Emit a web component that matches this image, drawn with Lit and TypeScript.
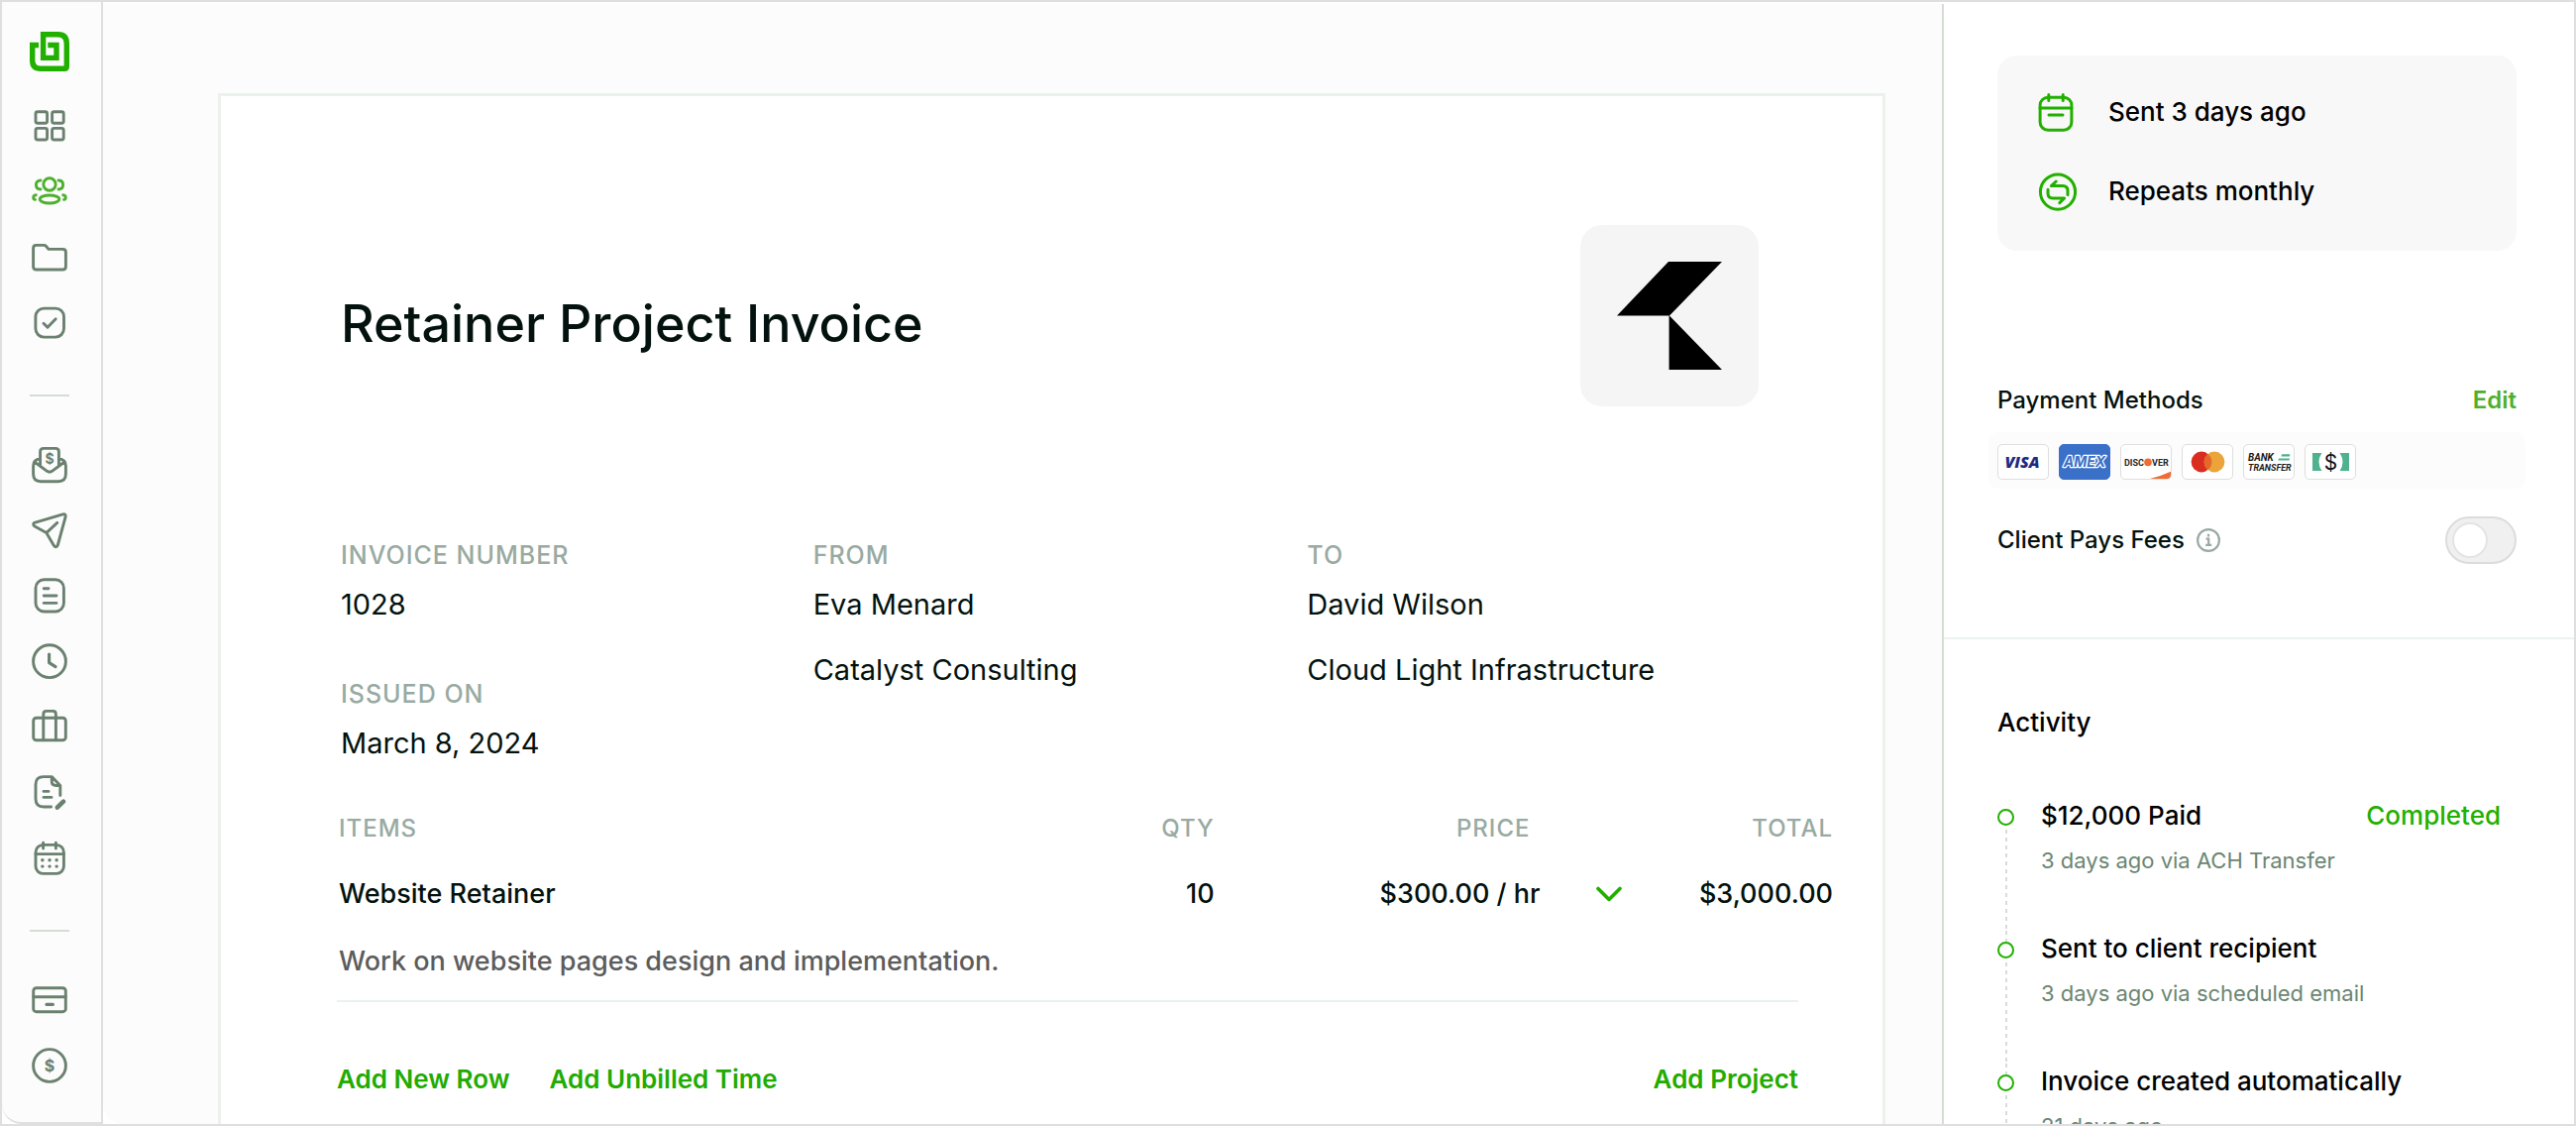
import { LitElement, html, css, svg } from "lit";
import type { SVGTemplateResult } from "lit";
import { customElement, property, state } from "lit/decorators.js";
import { classMap } from "lit/directives/class-map.js";

interface NavEntry {
  label: string;
  icon: SVGTemplateResult;
  active?: boolean;
}

interface ActivityEntry {
  title: string;
  detail: string;
  status?: string;
}

const navGroups: NavEntry[][] = [
  [
    {
      label: "Dashboard",
      icon: svg`<rect x="4" y="3.7" width="11.6" height="11.6" rx="2" /><rect x="20.6" y="3.7" width="11.6" height="11.6" rx="2" /><rect x="4" y="20.4" width="11.6" height="11.6" rx="2" /><rect x="20.6" y="20.4" width="11.6" height="11.6" rx="2" />`,
    },
    {
      label: "Clients",
      active: true,
      icon: svg`<circle cx="18" cy="11" r="6.2" /><ellipse cx="18" cy="26" rx="9.8" ry="4" /><path d="M9 7C6 7 4.4 9 4.4 11.5S6 16 9 16M27 7C30 7 31.6 9 31.6 11.5S30 16 27 16M4.3 21.8C2.5 22 1.7 23 1.7 24.3S2.4 26.3 3.5 26.4M31.7 21.8C33.5 22 34.3 23 34.3 24.3S33.6 26.3 32.5 26.4" />`,
    },
    {
      label: "Projects",
      icon: svg`<path d="M4.5 6.4H12.4Q13.6 6.4 14.4 7.3L17 10.4H31.4Q34.4 10.4 34.4 13.4V28Q34.4 31 31.4 31H4.6Q1.6 31 1.6 28V9.4Q1.6 6.4 4.5 6.4Z" />`,
    },
    {
      label: "Tasks",
      icon: svg`<rect x="3.9" y="4.1" width="28.6" height="29" rx="8.5" /><path d="M12 19.2L16 23.2L24.2 14.8" />`,
    },
  ],
  [
    {
      label: "Invoices",
      icon: svg`<path d="M8.6 18.6V4.5Q8.6 1.4 12 1.4H24Q27.4 1.4 27.4 4.5V18.6M8.6 11.8Q1.6 12.6 1.6 19V27Q1.6 34.7 9 34.7H27Q34.4 34.7 34.4 27V19Q34.4 12.6 27.4 11.8M2.8 15L15.5 24.3Q18 26 20.5 24.3L33.2 15" /><text class="sign" x="18" y="17.4" font-size="14">$</text>`,
    },
    {
      label: "Proposals",
      icon: svg`<path d="M2.8 10.3L31.5 1.9Q34.8 1.2 34.1 4.5L26.3 33Q24.6 36.2 22.4 33.4L14.8 20.6L2.6 13.8Q0.6 11.6 2.8 10.3ZM14.8 20.6L25.8 10.4" />`,
    },
    {
      label: "Contracts",
      icon: svg`<rect x="4" y="1.8" width="28.4" height="32.2" rx="8.5" /><path d="M12.2 10.8H17M12.2 18H25M12.2 25.4H25" />`,
    },
    {
      label: "Time tracking",
      icon: svg`<circle cx="18" cy="18.2" r="16.4" /><path stroke-width="3.2" d="M17.6 11V19.6L24 23.6" />`,
    },
    {
      label: "Services",
      icon: svg`<rect x="1.7" y="9.2" width="32.6" height="22.6" rx="3" /><path d="M11.8 31.8V5.4Q11.8 2.4 14.8 2.4H21.4Q24.4 2.4 24.4 5.4V31.8" />`,
    },
    {
      label: "Forms",
      icon: svg`<path d="M19.6 33H12Q4 33 4 25V10.4Q4 2.6 12 2.6H20.2L28.8 11.5V21.6M20.2 3V7Q20.2 11.5 24.6 11.5H28.4M12 17.4H17M12 23.4H20" /><path stroke-width="4.6" d="M25.8 33.6L32 27.6" />`,
    },
    {
      label: "Calendar",
      icon: svg`<rect x="4" y="5.4" width="28.4" height="29" rx="7.5" /><path d="M4 14.6H32.4M11.6 3.2V9M24.4 3.2V9" /><path stroke-width="3.4" d="M10.8 20.8h.1M18 20.8h.1M25.1 20.8h.1M10.8 27.1h.1M18 27.1h.1M25.1 27.1h.1" />`,
    },
  ],
  [
    {
      label: "Banking",
      icon: svg`<rect x="1.7" y="5.7" width="32.6" height="24" rx="3" /><path d="M1.7 14.8H34.3" /><path stroke-width="3.2" d="M15 22.4H21.4" />`,
    },
    {
      label: "Accounting",
      icon: svg`<circle cx="18" cy="18" r="16.4" /><text class="sign" x="18" y="23.6" font-size="16">$</text>`,
    },
  ],
];

const activity: ActivityEntry[] = [
  { title: "$12,000 Paid", detail: "3 days ago via ACH Transfer", status: "Completed" },
  { title: "Sent to client recipient", detail: "3 days ago via scheduled email" },
  { title: "Invoice created automatically", detail: "21 days ago" },
];

const paymentCards: { name: string; tone: string; art: SVGTemplateResult }[] = [
  {
    name: "Visa",
    tone: "plain",
    art: svg`<text x="24" y="23" font-family="Open Sans, sans-serif" font-size="16" font-weight="800" font-style="italic" text-anchor="middle" fill="#1f2a80">VISA</text>`,
  },
  {
    name: "American Express",
    tone: "blue",
    art: svg`<text x="25" y="22" font-family="Inter, sans-serif" font-size="14" font-weight="700" font-style="italic" text-anchor="middle" fill="#3a70c8" stroke="#fff" stroke-width="2.4" stroke-linejoin="round" paint-order="stroke">AMEX</text>`,
  },
  {
    name: "Discover",
    tone: "plain",
    art: svg`<path d="M22 35.5Q38 32.5 51.5 26V32Q51.5 35.5 48 35.5Z" fill="#ed6d33" /><text x="3" y="20.6" font-family="Roboto, sans-serif" font-size="9" font-weight="700" fill="#262626">DISC</text><circle cx="27" cy="17.4" r="3.8" fill="#ed6d33" /><text x="31" y="20.6" font-family="Roboto, sans-serif" font-size="9" font-weight="700" fill="#262626">VER</text>`,
  },
  {
    name: "Mastercard",
    tone: "plain",
    art: svg`<circle cx="19" cy="17" r="10.4" fill="#d92d20" /><circle cx="32" cy="17" r="10.4" fill="#eba43a" /><path d="M25.5 8.9A10.4 10.4 0 0 1 25.5 25.1A10.4 10.4 0 0 1 25.5 8.9Z" fill="#e4692b" />`,
  },
  {
    name: "Bank transfer",
    tone: "plain",
    art: svg`<text x="4" y="16" font-family="Roboto, sans-serif" font-size="10" font-weight="700" font-style="italic" fill="#1b1b1b">BANK</text><text x="4" y="25.6" font-family="Roboto, sans-serif" font-size="9" font-weight="700" font-style="italic" fill="#1b1b1b">TRANSFER</text><path d="M38 9.2h8.4l-.5 2.2h-8.4zM35 13.4h11l-.5 2.2H34.4z" fill="#4fb18d" />`,
  },
  {
    name: "Cash",
    tone: "plain",
    art: svg`<path d="M7 8h9.4Q10.6 17 16.4 26H7zM44 8h-9.4Q40.4 17 34.6 26H44z" fill="#4fb18d" /><text x="25.5" y="24.6" font-family="Inter, sans-serif" font-size="21" font-weight="400" text-anchor="middle" fill="#111">$</text>`,
  },
];

@customElement("side-nav")
export class SideNav extends LitElement {
  static styles = css`
    :host {
      display: block;
      box-sizing: border-box;
      border-right: 2px solid #dfdfdf;
      border-bottom: 2px solid #dfdfdf;
      border-bottom-left-radius: 20px;
      background: #fcfcfc;
    }
    .nav {
      display: flex;
      flex-direction: column;
      align-items: center;
      padding: 30px 32px 0 28px;
      width: 40px;
    }
    .logo {
      display: block;
      width: 40px;
      height: 40px;
      margin-bottom: 37px;
    }
    .group {
      display: flex;
      flex-direction: column;
      align-items: center;
      gap: 30px;
      margin: 0;
      padding: 0;
      list-style: none;
    }
    .group + .group {
      margin-top: 55px;
      padding-top: 51px;
      width: 40px;
      border-top: 2px solid #d5ddd5;
    }
    .link {
      display: block;
      width: 36px;
      height: 36px;
      color: #6b8170;
    }
    .link.active {
      color: #4eb02e;
    }
    .icon {
      display: block;
      width: 36px;
      height: 36px;
      overflow: visible;
      fill: none;
      stroke: currentColor;
      stroke-width: 2.9;
      stroke-linecap: round;
      stroke-linejoin: round;
    }
    .sign {
      fill: currentColor;
      stroke: none;
      font-family: Inter, sans-serif;
      font-weight: 700;
      text-anchor: middle;
    }
  `;

  render() {
    return html`
      <nav class="nav" aria-label="Main">
        <a class="logo" href="#home" aria-label="Home">
          <svg viewBox="0 0 40 40" width="40" height="40" fill="none" stroke="#22b000" stroke-width="5.4">
            <path d="M9 13.5H2.7V29Q2.7 37.3 11 37.3H35.3Q37.3 37.3 37.3 35.3V12Q37.3 2.7 29 2.7H13.6V26.4H27V13.5H18.3" />
          </svg>
        </a>
        ${navGroups.map(
          (group) => html`
            <ul class="group">
              ${group.map(
                (entry) => html`
                  <li>
                    <a
                      class=${classMap({ link: true, active: !!entry.active })}
                      href="#${entry.label.toLowerCase().replace(" ", "-")}"
                      aria-label=${entry.label}
                    >
                      <svg class="icon" viewBox="0 0 36 36">${entry.icon}</svg>
                    </a>
                  </li>
                `,
              )}
            </ul>
          `,
        )}
      </nav>
    `;
  }
}

@customElement("invoice-sheet")
export class InvoiceSheet extends LitElement {
  static styles = css`
    :host {
      display: block;
      box-sizing: border-box;
      border: 3px solid #ebf1eb;
      border-bottom: 0;
      background: #fff;
      padding: 130px 0 0 117px;
      color: #03120e;
      font-size: 29px;
      line-height: 36px;
    }
    .head {
      display: flex;
      align-items: center;
      justify-content: space-between;
      padding-right: 125px;
      padding-left: 4px;
    }
    .title {
      margin: 0;
      padding-top: 16px;
      font-size: 52px;
      font-weight: 500;
      line-height: 64px;
    }
    .brand {
      display: flex;
      align-items: center;
      justify-content: center;
      width: 180px;
      height: 183px;
      border-radius: 22px;
      background: #f5f5f5;
    }
    .meta {
      display: grid;
      grid-template-columns: 477fr 499fr 496fr;
      margin-top: 134px;
      padding-right: 85px;
      padding-left: 4px;
    }
    .meta dl {
      margin: 0;
    }
    .label,
    .items th {
      color: #98aaa2;
      font-size: 25px;
      font-weight: 500;
      line-height: 32px;
      letter-spacing: 1px;
    }
    .meta dd {
      margin: 16px 0 0;
    }
    .meta dd + dd {
      margin-top: 30px;
    }
    .meta dd + .label {
      margin-top: 56px;
    }
    .items-wrap {
      margin-top: 52px;
      padding-right: 50px;
      padding-left: 2px;
    }
    .items {
      width: 100%;
      border-collapse: collapse;
      table-layout: fixed;
      font-size: 27px;
      font-weight: 500;
    }
    .items th,
    .items td {
      padding: 0;
      text-align: left;
    }
    .items th {
      font-size: 24px;
    }
    .items td {
      padding-top: 32px;
    }
    .items .num {
      text-align: right;
      white-space: nowrap;
    }
    .items th.price {
      padding-right: 10px;
    }
    .col-qty {
      width: 8.7%;
    }
    .col-price {
      width: 21.8%;
    }
    .col-unit {
      width: 5.6%;
    }
    .col-total {
      width: 14%;
    }
    .items .unit {
      text-align: right;
    }
    .items .desc {
      color: #5c5c5c;
    }
    .unit-button {
      padding: 0;
      border: 0;
      background: none;
      width: 28px;
      height: 20px;
      vertical-align: middle;
    }
    .unit-button svg {
      display: block;
    }
    .actions {
      display: flex;
      gap: 40px;
      margin: 21px 85px 0 0;
      padding-top: 60px;
      border-top: 2px solid #ebf1eb;
    }
    .action {
      padding: 0;
      border: 0;
      background: none;
      color: #22ab00;
      font: 600 26px/36px Inter, sans-serif;
    }
    .action.last {
      margin-left: auto;
    }
  `;

  render() {
    return html`
      <header class="head">
        <h1 class="title">Retainer Project Invoice</h1>
        <div class="brand">
          <svg width="106" height="110" viewBox="0 0 106 110" role="img" aria-label="Catalyst Consulting">
            <path d="M52 0H106L53 54.6L106 109H52.6V54.6H0Z" />
          </svg>
        </div>
      </header>
      <section class="meta">
        <dl>
          <dt class="label">INVOICE NUMBER</dt>
          <dd>1028</dd>
          <dt class="label">ISSUED ON</dt>
          <dd>March 8, 2024</dd>
        </dl>
        <dl>
          <dt class="label">FROM</dt>
          <dd>Eva Menard</dd>
          <dd>Catalyst Consulting</dd>
        </dl>
        <dl>
          <dt class="label">TO</dt>
          <dd>David Wilson</dd>
          <dd>Cloud Light Infrastructure</dd>
        </dl>
      </section>
      <div class="items-wrap">
        <table class="items">
          <colgroup>
            <col />
            <col class="col-qty" />
            <col class="col-price" />
            <col class="col-unit" />
            <col class="col-total" />
          </colgroup>
          <thead>
            <tr>
              <th scope="col">ITEMS</th>
              <th scope="col" class="num">QTY</th>
              <th scope="col" class="num price">PRICE</th>
              <td></td>
              <th scope="col" class="num">TOTAL</th>
            </tr>
          </thead>
          <tbody>
            <tr>
              <td>Website Retainer</td>
              <td class="num">10</td>
              <td class="num">$300.00 / hr</td>
              <td class="unit">
                <button class="unit-button" type="button" aria-label="Change unit">
                  <svg width="28" height="20" viewBox="0 0 28 20" fill="none" stroke="#22b000" stroke-width="3.6" stroke-linecap="round" stroke-linejoin="round">
                    <path d="M2 2.4L13 13.4L24 2.4" />
                  </svg>
                </button>
              </td>
              <td class="num">$3,000.00</td>
            </tr>
            <tr>
              <td class="desc" colspan="5">Work on website pages design and implementation.</td>
            </tr>
          </tbody>
        </table>
      </div>
      <footer class="actions">
        <button class="action" type="button">Add New Row</button>
        <button class="action" type="button">Add Unbilled Time</button>
        <button class="action last" type="button">Add Project</button>
      </footer>
    `;
  }
}

@customElement("invoice-details")
export class InvoiceDetails extends LitElement {
  static styles = css`
    :host {
      display: block;
      box-sizing: border-box;
      border-left: 2px solid #d5ddd5;
      background: #fff;
      color: #000;
      font-size: 26px;
      font-weight: 500;
      line-height: 36px;
    }
    .block {
      padding: 0 58px 0 54px;
    }
    .status {
      display: flex;
      flex-direction: column;
      gap: 40px;
      margin: 52px 0 135px;
      padding: 37px 41px 40px;
      border-radius: 20px;
      background: #f8f8f8;
      list-style: none;
    }
    .status li {
      display: flex;
      align-items: center;
      gap: 31px;
      height: 40px;
    }
    .line-icon {
      width: 40px;
      height: 40px;
      fill: none;
      stroke: #22b000;
      stroke-width: 3;
      stroke-linecap: round;
      stroke-linejoin: round;
    }
    .row {
      display: flex;
      align-items: center;
      justify-content: space-between;
      color: #03120e;
      font-size: 24px;
      line-height: 32px;
    }
    .row-title {
      margin: 0;
      font-size: 24px;
      font-weight: 500;
    }
    .edit {
      color: #4eb02e;
      font-weight: 600;
      text-decoration: none;
    }
    .cards {
      display: flex;
      gap: 10px;
      margin: 16px -9px 28px;
      padding: 12px 9px 9px;
      border-radius: 10px;
      background: #fcfcfc;
      list-style: none;
    }
    .card {
      box-sizing: border-box;
      width: 52px;
      height: 36px;
      border: 1px solid #dedede;
      border-radius: 5px;
      background: #fff;
      overflow: hidden;
    }
    .card.blue {
      border-color: #3a70c8;
      background: #3a70c8;
    }
    .card svg {
      display: block;
    }
    .fees {
      display: flex;
      align-items: center;
      gap: 12px;
    }
    .info {
      display: block;
      width: 24px;
      height: 24px;
      padding: 0;
      border: 0;
      background: none;
    }
    .info svg {
      display: block;
    }
    .toggle {
      appearance: none;
      box-sizing: border-box;
      display: flex;
      align-items: center;
      width: 72px;
      height: 48px;
      margin: 0;
      padding: 0 5px;
      border: 2px solid #dcdcdc;
      border-radius: 24px;
      background: #f0f0f0;
    }
    .toggle::before {
      content: "";
      box-sizing: border-box;
      width: 36px;
      height: 36px;
      border: 2px solid #e4e4e4;
      border-radius: 50%;
      background: #fff;
    }
    .toggle:checked {
      justify-content: flex-end;
      background: #22b000;
    }
    .rule {
      margin: 74px 0 66px;
      border: 0;
      border-top: 2px solid #ebf1ee;
    }
    .heading {
      margin: 0 0 58px;
      font-size: 26px;
      font-weight: 500;
    }
    .timeline {
      margin: 0;
      padding: 0;
      list-style: none;
    }
    .event {
      display: grid;
      grid-template-columns: 17px 1fr auto;
      column-gap: 27px;
      padding-right: 16px;
    }
    .marker {
      display: flex;
      flex-direction: column;
      align-items: center;
    }
    .marker::before {
      content: "";
      height: 11px;
      width: 2px;
      background: repeating-linear-gradient(#d5ddda 0 4px, #fff 4px 8px);
    }
    .event:first-child .marker::before {
      background: none;
    }
    .marker::after {
      content: "";
      flex: 1;
      width: 2px;
      background: repeating-linear-gradient(#fff 0 4px, #d5ddda 4px 8px);
    }
    .dot {
      box-sizing: border-box;
      width: 17px;
      height: 17px;
      border: 2px solid #22b000;
      border-radius: 50%;
    }
    .event-title {
      margin: 0 0 13px;
    }
    .event-detail {
      margin: 0 0 57px;
      color: #6b8672;
      font-size: 22px;
      font-weight: 400;
      line-height: 28px;
    }
    .done {
      color: #22b000;
    }
  `;

  @state() private clientPaysFees = false;

  render() {
    return html`
      <div class="block">
        <ul class="status">
          <li>
            <svg class="line-icon" viewBox="0 0 40 40">
              <rect x="2.1" y="5.2" width="31.8" height="33" rx="8" />
              <path d="M2.1 16H33.9M10.8 2.4V8.6M25.2 2.4V8.6M11 23H25" />
            </svg>
            Sent 3 days ago
          </li>
          <li>
            <svg class="line-icon" viewBox="0 0 40 40">
              <circle cx="20" cy="20.6" r="17.6" />
              <path d="M18.2 10L13.4 14.6H25Q30 14.6 30 19.6V23.4M21.8 31.6L26.6 27H15Q10 27 10 22V18.2" />
            </svg>
            Repeats monthly
          </li>
        </ul>
        <div class="row">
          <h2 class="row-title">Payment Methods</h2>
          <a class="edit" href="#payment-methods">Edit</a>
        </div>
        <ul class="cards">
          ${paymentCards.map(
            (card) => html`
              <li class="card ${card.tone}">
                <svg width="50" height="34" viewBox="0 0 50 34" role="img" aria-label=${card.name}>${card.art}</svg>
              </li>
            `,
          )}
        </ul>
        <div class="row">
          <div class="fees">
            <label for="fees">Client Pays Fees</label>
            <button class="info" type="button" aria-label="About client fees">
              <svg width="24" height="24" viewBox="0 0 24 24" fill="none" stroke="#98aaa2" stroke-width="2.2">
                <circle cx="12" cy="12" r="10.9" />
                <path d="M9.6 10.6H12.2V16.6M9.2 16.8H15.2M12 5.8V8.4" />
              </svg>
            </button>
          </div>
          <input
            class="toggle"
            id="fees"
            type="checkbox"
            role="switch"
            .checked=${this.clientPaysFees}
            @change=${(e: Event) => (this.clientPaysFees = (e.target as HTMLInputElement).checked)}
          />
        </div>
      </div>
      <hr class="rule" />
      <div class="block">
        <h2 class="heading">Activity</h2>
        <ol class="timeline">
          ${activity.map(
            (item) => html`
              <li class="event">
                <div class="marker"><span class="dot"></span></div>
                <div>
                  <p class="event-title">${item.title}</p>
                  <p class="event-detail">${item.detail}</p>
                </div>
                ${item.status ? html`<span class="done">${item.status}</span>` : null}
              </li>
            `,
          )}
        </ol>
      </div>
    `;
  }
}

@customElement("app-root")
export class AppRoot extends LitElement {
  static styles = css`
    :host {
      display: grid;
      grid-template-columns: auto 1fr 638px;
      box-sizing: border-box;
      height: 100vh;
      overflow: hidden;
      border: 2px solid #dfdfdf;
      background: #fff;
      font-family: Inter, "Liberation Sans", sans-serif;
    }
    .canvas,
    .details {
      min-width: 0;
      min-height: 0;
      margin-top: 2px;
      overflow: hidden;
    }
    .canvas {
      display: flex;
      flex-direction: column;
      box-sizing: border-box;
      padding: 90px 57px 0 116px;
      border-bottom-left-radius: 20px;
      background: #fcfcfc;
    }
    .sheet {
      flex: 1 0 auto;
    }
  `;

  @property() invoice = "1028";

  render() {
    return html`
      <side-nav></side-nav>
      <main class="canvas" aria-label="Invoice ${this.invoice}">
        <invoice-sheet class="sheet"></invoice-sheet>
      </main>
      <invoice-details class="details"></invoice-details>
    `;
  }
}
